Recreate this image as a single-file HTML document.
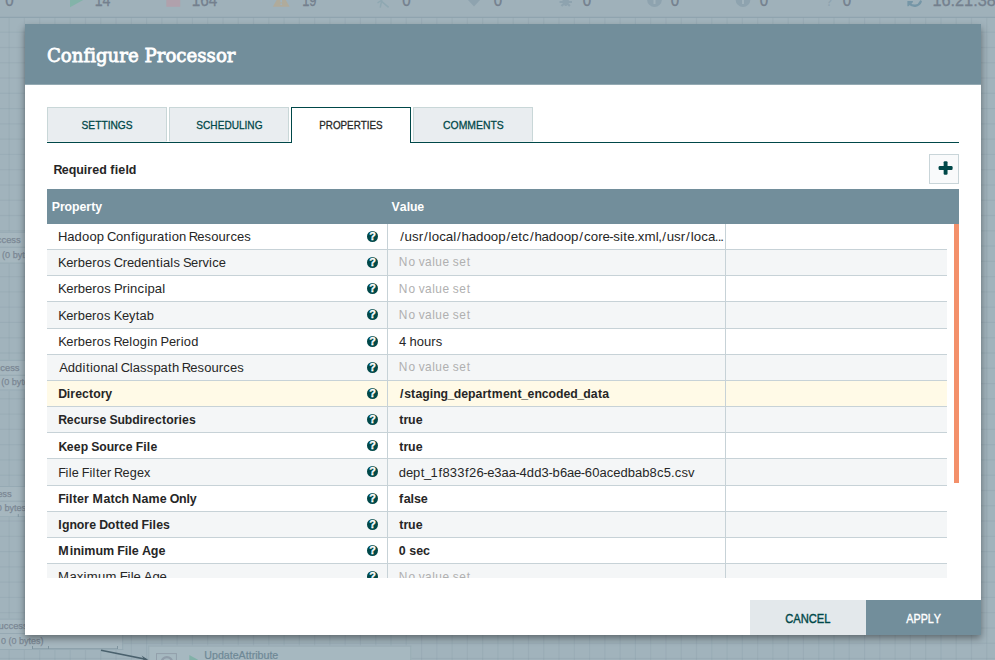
<!DOCTYPE html>
<html lang="en">
<head>
<meta charset="utf-8">
<title>Configure Processor</title>
<style>
*{box-sizing:border-box;margin:0;padding:0}
html,body{width:995px;height:660px;overflow:hidden}
body{position:relative;background:#a1b3bc;font-family:'Liberation Sans',Arial,sans-serif;color:#262626}
#canvas{position:absolute;left:0;top:0;width:995px;height:660px}
#shadow{position:absolute;left:25px;top:24px;width:956px;height:611px;box-shadow:0 3.5px 7.5px 0 rgba(0,0,0,.42)}
#geo{position:absolute;left:0;top:0}
#txt{position:absolute;left:0;top:0;font-family:'Liberation Sans',Arial,sans-serif;font-variant-ligatures:none;font-kerning:none}
#bgt{position:absolute;left:0;top:0;font-family:'Liberation Sans',Arial,sans-serif}
#grid{position:absolute;left:0;top:0;width:995px;height:578px;overflow:hidden}
.q{position:absolute;left:367px;width:11.2px;height:11.2px;border-radius:50%;background:#004849;color:#fff;font-size:10.8px;font-weight:bold;line-height:11.4px;text-align:center;display:block;-webkit-text-stroke:0.35px #fff}
</style>
</head>
<body>
<svg id="canvas" width="995" height="660" viewBox="0 0 995 660">
<rect x="8.55" y="17.8" width="1.1" height="650" fill="rgba(105,130,143,0.13)"/>
<rect x="23.83" y="17.8" width="1.1" height="650" fill="rgba(105,130,143,0.13)"/>
<rect x="39.10" y="17.8" width="1.1" height="650" fill="rgba(105,130,143,0.13)"/>
<rect x="54.38" y="17.8" width="1.1" height="650" fill="rgba(105,130,143,0.13)"/>
<rect x="69.65" y="17.8" width="1.1" height="650" fill="rgba(105,130,143,0.13)"/>
<rect x="84.93" y="17.8" width="1.1" height="650" fill="rgba(105,130,143,0.13)"/>
<rect x="100.21" y="17.8" width="1.1" height="650" fill="rgba(105,130,143,0.13)"/>
<rect x="115.48" y="17.8" width="1.1" height="650" fill="rgba(105,130,143,0.13)"/>
<rect x="130.76" y="17.8" width="1.1" height="650" fill="rgba(105,130,143,0.13)"/>
<rect x="146.03" y="17.8" width="1.1" height="650" fill="rgba(105,130,143,0.13)"/>
<rect x="161.31" y="17.8" width="1.1" height="650" fill="rgba(105,130,143,0.13)"/>
<rect x="176.59" y="17.8" width="1.1" height="650" fill="rgba(105,130,143,0.13)"/>
<rect x="191.86" y="17.8" width="1.1" height="650" fill="rgba(105,130,143,0.13)"/>
<rect x="207.14" y="17.8" width="1.1" height="650" fill="rgba(105,130,143,0.13)"/>
<rect x="222.41" y="17.8" width="1.1" height="650" fill="rgba(105,130,143,0.13)"/>
<rect x="237.69" y="17.8" width="1.1" height="650" fill="rgba(105,130,143,0.13)"/>
<rect x="252.97" y="17.8" width="1.1" height="650" fill="rgba(105,130,143,0.13)"/>
<rect x="268.24" y="17.8" width="1.1" height="650" fill="rgba(105,130,143,0.13)"/>
<rect x="283.52" y="17.8" width="1.1" height="650" fill="rgba(105,130,143,0.13)"/>
<rect x="298.79" y="17.8" width="1.1" height="650" fill="rgba(105,130,143,0.13)"/>
<rect x="314.07" y="17.8" width="1.1" height="650" fill="rgba(105,130,143,0.13)"/>
<rect x="329.35" y="17.8" width="1.1" height="650" fill="rgba(105,130,143,0.13)"/>
<rect x="344.62" y="17.8" width="1.1" height="650" fill="rgba(105,130,143,0.13)"/>
<rect x="359.90" y="17.8" width="1.1" height="650" fill="rgba(105,130,143,0.13)"/>
<rect x="375.17" y="17.8" width="1.1" height="650" fill="rgba(105,130,143,0.13)"/>
<rect x="390.45" y="17.8" width="1.1" height="650" fill="rgba(105,130,143,0.13)"/>
<rect x="405.73" y="17.8" width="1.1" height="650" fill="rgba(105,130,143,0.13)"/>
<rect x="421.00" y="17.8" width="1.1" height="650" fill="rgba(105,130,143,0.13)"/>
<rect x="436.28" y="17.8" width="1.1" height="650" fill="rgba(105,130,143,0.13)"/>
<rect x="451.55" y="17.8" width="1.1" height="650" fill="rgba(105,130,143,0.13)"/>
<rect x="466.83" y="17.8" width="1.1" height="650" fill="rgba(105,130,143,0.13)"/>
<rect x="482.11" y="17.8" width="1.1" height="650" fill="rgba(105,130,143,0.13)"/>
<rect x="497.38" y="17.8" width="1.1" height="650" fill="rgba(105,130,143,0.13)"/>
<rect x="512.66" y="17.8" width="1.1" height="650" fill="rgba(105,130,143,0.13)"/>
<rect x="527.93" y="17.8" width="1.1" height="650" fill="rgba(105,130,143,0.13)"/>
<rect x="543.21" y="17.8" width="1.1" height="650" fill="rgba(105,130,143,0.13)"/>
<rect x="558.49" y="17.8" width="1.1" height="650" fill="rgba(105,130,143,0.13)"/>
<rect x="573.76" y="17.8" width="1.1" height="650" fill="rgba(105,130,143,0.13)"/>
<rect x="589.04" y="17.8" width="1.1" height="650" fill="rgba(105,130,143,0.13)"/>
<rect x="604.31" y="17.8" width="1.1" height="650" fill="rgba(105,130,143,0.13)"/>
<rect x="619.59" y="17.8" width="1.1" height="650" fill="rgba(105,130,143,0.13)"/>
<rect x="634.87" y="17.8" width="1.1" height="650" fill="rgba(105,130,143,0.13)"/>
<rect x="650.14" y="17.8" width="1.1" height="650" fill="rgba(105,130,143,0.13)"/>
<rect x="665.42" y="17.8" width="1.1" height="650" fill="rgba(105,130,143,0.13)"/>
<rect x="680.69" y="17.8" width="1.1" height="650" fill="rgba(105,130,143,0.13)"/>
<rect x="695.97" y="17.8" width="1.1" height="650" fill="rgba(105,130,143,0.13)"/>
<rect x="711.25" y="17.8" width="1.1" height="650" fill="rgba(105,130,143,0.13)"/>
<rect x="726.52" y="17.8" width="1.1" height="650" fill="rgba(105,130,143,0.13)"/>
<rect x="741.80" y="17.8" width="1.1" height="650" fill="rgba(105,130,143,0.13)"/>
<rect x="757.07" y="17.8" width="1.1" height="650" fill="rgba(105,130,143,0.13)"/>
<rect x="772.35" y="17.8" width="1.1" height="650" fill="rgba(105,130,143,0.13)"/>
<rect x="787.63" y="17.8" width="1.1" height="650" fill="rgba(105,130,143,0.13)"/>
<rect x="802.90" y="17.8" width="1.1" height="650" fill="rgba(105,130,143,0.13)"/>
<rect x="818.18" y="17.8" width="1.1" height="650" fill="rgba(105,130,143,0.13)"/>
<rect x="833.45" y="17.8" width="1.1" height="650" fill="rgba(105,130,143,0.13)"/>
<rect x="848.73" y="17.8" width="1.1" height="650" fill="rgba(105,130,143,0.13)"/>
<rect x="864.01" y="17.8" width="1.1" height="650" fill="rgba(105,130,143,0.13)"/>
<rect x="879.28" y="17.8" width="1.1" height="650" fill="rgba(105,130,143,0.13)"/>
<rect x="894.56" y="17.8" width="1.1" height="650" fill="rgba(105,130,143,0.13)"/>
<rect x="909.83" y="17.8" width="1.1" height="650" fill="rgba(105,130,143,0.13)"/>
<rect x="925.11" y="17.8" width="1.1" height="650" fill="rgba(105,130,143,0.13)"/>
<rect x="940.39" y="17.8" width="1.1" height="650" fill="rgba(105,130,143,0.13)"/>
<rect x="955.66" y="17.8" width="1.1" height="650" fill="rgba(105,130,143,0.13)"/>
<rect x="970.94" y="17.8" width="1.1" height="650" fill="rgba(105,130,143,0.13)"/>
<rect x="986.21" y="17.8" width="1.1" height="650" fill="rgba(105,130,143,0.13)"/>
<rect x="0" y="31.65" width="995" height="1.1" fill="rgba(105,130,143,0.13)"/>
<rect x="0" y="46.93" width="995" height="1.1" fill="rgba(105,130,143,0.13)"/>
<rect x="0" y="62.20" width="995" height="1.1" fill="rgba(105,130,143,0.13)"/>
<rect x="0" y="77.48" width="995" height="1.1" fill="rgba(105,130,143,0.13)"/>
<rect x="0" y="92.75" width="995" height="1.1" fill="rgba(105,130,143,0.13)"/>
<rect x="0" y="108.03" width="995" height="1.1" fill="rgba(105,130,143,0.13)"/>
<rect x="0" y="123.31" width="995" height="1.1" fill="rgba(105,130,143,0.13)"/>
<rect x="0" y="138.58" width="995" height="1.1" fill="rgba(105,130,143,0.13)"/>
<rect x="0" y="153.86" width="995" height="1.1" fill="rgba(105,130,143,0.13)"/>
<rect x="0" y="169.13" width="995" height="1.1" fill="rgba(105,130,143,0.13)"/>
<rect x="0" y="184.41" width="995" height="1.1" fill="rgba(105,130,143,0.13)"/>
<rect x="0" y="199.69" width="995" height="1.1" fill="rgba(105,130,143,0.13)"/>
<rect x="0" y="214.96" width="995" height="1.1" fill="rgba(105,130,143,0.13)"/>
<rect x="0" y="230.24" width="995" height="1.1" fill="rgba(105,130,143,0.13)"/>
<rect x="0" y="245.51" width="995" height="1.1" fill="rgba(105,130,143,0.13)"/>
<rect x="0" y="260.79" width="995" height="1.1" fill="rgba(105,130,143,0.13)"/>
<rect x="0" y="276.07" width="995" height="1.1" fill="rgba(105,130,143,0.13)"/>
<rect x="0" y="291.34" width="995" height="1.1" fill="rgba(105,130,143,0.13)"/>
<rect x="0" y="306.62" width="995" height="1.1" fill="rgba(105,130,143,0.13)"/>
<rect x="0" y="321.89" width="995" height="1.1" fill="rgba(105,130,143,0.13)"/>
<rect x="0" y="337.17" width="995" height="1.1" fill="rgba(105,130,143,0.13)"/>
<rect x="0" y="352.45" width="995" height="1.1" fill="rgba(105,130,143,0.13)"/>
<rect x="0" y="367.72" width="995" height="1.1" fill="rgba(105,130,143,0.13)"/>
<rect x="0" y="383.00" width="995" height="1.1" fill="rgba(105,130,143,0.13)"/>
<rect x="0" y="398.27" width="995" height="1.1" fill="rgba(105,130,143,0.13)"/>
<rect x="0" y="413.55" width="995" height="1.1" fill="rgba(105,130,143,0.13)"/>
<rect x="0" y="428.83" width="995" height="1.1" fill="rgba(105,130,143,0.13)"/>
<rect x="0" y="444.10" width="995" height="1.1" fill="rgba(105,130,143,0.13)"/>
<rect x="0" y="459.38" width="995" height="1.1" fill="rgba(105,130,143,0.13)"/>
<rect x="0" y="474.65" width="995" height="1.1" fill="rgba(105,130,143,0.13)"/>
<rect x="0" y="489.93" width="995" height="1.1" fill="rgba(105,130,143,0.13)"/>
<rect x="0" y="505.21" width="995" height="1.1" fill="rgba(105,130,143,0.13)"/>
<rect x="0" y="520.48" width="995" height="1.1" fill="rgba(105,130,143,0.13)"/>
<rect x="0" y="535.76" width="995" height="1.1" fill="rgba(105,130,143,0.13)"/>
<rect x="0" y="551.03" width="995" height="1.1" fill="rgba(105,130,143,0.13)"/>
<rect x="0" y="566.31" width="995" height="1.1" fill="rgba(105,130,143,0.13)"/>
<rect x="0" y="581.59" width="995" height="1.1" fill="rgba(105,130,143,0.13)"/>
<rect x="0" y="596.86" width="995" height="1.1" fill="rgba(105,130,143,0.13)"/>
<rect x="0" y="612.14" width="995" height="1.1" fill="rgba(105,130,143,0.13)"/>
<rect x="0" y="627.41" width="995" height="1.1" fill="rgba(105,130,143,0.13)"/>
<rect x="0" y="642.69" width="995" height="1.1" fill="rgba(105,130,143,0.13)"/>
<rect x="0" y="657.97" width="995" height="1.1" fill="rgba(105,130,143,0.13)"/>
<rect x="0" y="0" width="995" height="16.8" fill="#9fb1ba"/><rect x="0" y="16.8" width="995" height="1.1" fill="#8da2ad"/>
<rect x="-5.00" y="231.80" width="63.00" height="31.80" fill="#a6b7bf"/>
<rect x="-5.00" y="231.80" width="63.00" height="1.00" fill="#96aab4"/>
<rect x="-5.00" y="262.60" width="63.00" height="1.00" fill="#96aab4"/>
<rect x="-5.00" y="246.70" width="63.00" height="1.00" fill="rgba(140,160,172,.6)"/>
<rect x="57.00" y="231.80" width="1.00" height="31.80" fill="#96aab4"/>
<rect x="-5.00" y="359.80" width="63.00" height="30.70" fill="#a6b7bf"/>
<rect x="-5.00" y="359.80" width="63.00" height="1.00" fill="#96aab4"/>
<rect x="-5.00" y="389.50" width="63.00" height="1.00" fill="#96aab4"/>
<rect x="-5.00" y="374.80" width="63.00" height="1.00" fill="rgba(140,160,172,.6)"/>
<rect x="57.00" y="359.80" width="1.00" height="30.70" fill="#96aab4"/>
<rect x="-5.00" y="486.00" width="63.00" height="31.00" fill="#a6b7bf"/>
<rect x="-5.00" y="486.00" width="63.00" height="1.00" fill="#96aab4"/>
<rect x="-5.00" y="516.00" width="63.00" height="1.00" fill="#96aab4"/>
<rect x="-5.00" y="500.70" width="63.00" height="1.00" fill="rgba(140,160,172,.6)"/>
<rect x="57.00" y="486.00" width="1.00" height="31.00" fill="#96aab4"/>
<rect x="-5.00" y="618.60" width="128.20" height="31.40" fill="#a6b7bf"/>
<rect x="-5.00" y="618.60" width="128.20" height="1.00" fill="#96aab4"/>
<rect x="-5.00" y="649.00" width="128.20" height="1.00" fill="#96aab4"/>
<rect x="-5.00" y="633.00" width="128.20" height="1.00" fill="rgba(140,160,172,.6)"/>
<rect x="122.20" y="618.60" width="1.00" height="31.40" fill="#96aab4"/>
<rect x="32.40" y="648.00" width="85.40" height="1.00" fill="#8ea2ac"/>
<rect x="32.00" y="646.00" width="1.00" height="3.00" fill="#7f949f"/>
<rect x="48.00" y="646.00" width="1.00" height="3.00" fill="#7f949f"/>
<rect x="117.00" y="646.00" width="1.00" height="3.00" fill="#7f949f"/>
<rect x="-5.00" y="516.00" width="23.60" height="1.00" fill="#9aaeb7"/>
<rect x="17.80" y="514.00" width="1.00" height="3.00" fill="#8398a3"/>
<rect x="148.30" y="645.60" width="263.00" height="24.40" fill="#a6b8c0"/>
<rect x="148.30" y="645.60" width="263.00" height="1.00" fill="#98abb4"/>
<rect x="148.30" y="645.60" width="1.00" height="24.40" fill="#98abb4"/>
<rect x="410.30" y="645.60" width="1.00" height="24.40" fill="#98abb4"/>
<rect x="156.5" y="653.6" width="19.9" height="20" fill="none" stroke="#929fab" stroke-width="1"/>
<circle cx="166.9" cy="662.2" r="5.1" fill="none" stroke="#909dA9" stroke-width="2.4"/>
<polygon points="189.3,654.9 198.0,659.8 189.3,664.7" fill="#82b1a8"/>
<line x1="101" y1="650.3" x2="146" y2="659.3" stroke="#4a616d" stroke-width="1.6"/>
<polygon points="148.3,660.0 141.6,655.4 143.8,659.0 140.5,663.0" fill="#4a616d"/>
<polygon points="70,-8 84,-0.4 70,7.2" fill="#83b3a9"/>
<rect x="166.30" y="-7.00" width="13.90" height="13.80" fill="#b0a1ac"/>
<polygon points="281.2,-8 289.6,6.8 272.8,6.8" fill="#b0ab9b"/>
<circle cx="281.2" cy="4.3" r="1.0" fill="#a1b3bc"/><rect x="280.3" y="-4" width="1.8" height="6.4" fill="#a1b3bc"/>
<path d="M382.2 -2 L380.2 7.6 M381.6 1.4 L388.6 7.4 M382 0 L377.5 3" stroke="#8fa8b2" stroke-width="1.5" fill="none"/>
<polygon points="468,0 474,6.5 480,0" fill="#8ea3af"/>
<path d="M559.5 2 h12.5 M565.7 -3 v9 M561.5 -2 l8.4 8 M569.9 -2 l-8.4 8" stroke="#8ea3af" stroke-width="2.2" fill="none"/>
<circle cx="654.5" cy="-0.5" r="7.4" fill="#8ea3af"/><rect x="653.5" y="-2" width="2" height="6" fill="#a1b3bc"/>
<circle cx="743" cy="-0.5" r="7.4" fill="#8ea3af"/><rect x="742" y="-2" width="2" height="6" fill="#a1b3bc"/>
<path d="M909.6 3.4 C 912.5 6.9, 918.6 6.6, 920.7 1.6" stroke="#7596a7" stroke-width="2.4" fill="none" stroke-linecap="round"/><polygon points="907.4,1 912.9,1 912.9,2.2 908.4,6.2 907.4,6.2" fill="#7596a7"/>

</svg>
<svg id="bgt" width="995" height="660" viewBox="0 0 995 660">
<text x="5.25" y="6" font-size="16.2" fill="#74808e" textLength="8.40" lengthAdjust="spacingAndGlyphs" stroke="#74808e" stroke-width="0.3">0</text>
<text x="94.65" y="6" font-size="16.2" fill="#74808e" textLength="15.73" lengthAdjust="spacingAndGlyphs" stroke="#74808e" stroke-width="0.3">14</text>
<text x="191.78" y="6" font-size="16.2" fill="#74808e" textLength="25.43" lengthAdjust="spacingAndGlyphs" stroke="#74808e" stroke-width="0.3">164</text>
<text x="302.14" y="6" font-size="16.2" fill="#74808e" textLength="14.36" lengthAdjust="spacingAndGlyphs" stroke="#74808e" stroke-width="0.3">19</text>
<text x="402.15" y="6" font-size="16.2" fill="#74808e" textLength="8.40" lengthAdjust="spacingAndGlyphs" stroke="#74808e" stroke-width="0.3">0</text>
<text x="493.65" y="6" font-size="16.2" fill="#74808e" textLength="8.40" lengthAdjust="spacingAndGlyphs" stroke="#74808e" stroke-width="0.3">0</text>
<text x="582.85" y="6" font-size="16.2" fill="#74808e" textLength="8.40" lengthAdjust="spacingAndGlyphs" stroke="#74808e" stroke-width="0.3">0</text>
<text x="670.85" y="6" font-size="16.2" fill="#74808e" textLength="8.40" lengthAdjust="spacingAndGlyphs" stroke="#74808e" stroke-width="0.3">0</text>
<text x="759.85" y="6" font-size="16.2" fill="#74808e" textLength="8.40" lengthAdjust="spacingAndGlyphs" stroke="#74808e" stroke-width="0.3">0</text>
<text x="842.85" y="6" font-size="16.2" fill="#74808e" textLength="8.40" lengthAdjust="spacingAndGlyphs" stroke="#74808e" stroke-width="0.3">0</text>
<text x="932.41" y="6" font-size="16.2" fill="#74808e" textLength="63.35" lengthAdjust="spacingAndGlyphs" stroke="#74808e" stroke-width="0.3">16:21:38</text>
<text x="826.17" y="6" font-size="13.5" fill="#8ea3af" textLength="5.78" lengthAdjust="spacingAndGlyphs" font-weight="bold">?</text>
<text x="-13.14" y="243" font-size="9.9" fill="#7b8794" textLength="33.86" lengthAdjust="spacingAndGlyphs" stroke="#7b8794" stroke-width="0.25">success</text>
<text x="-5.54" y="258" font-size="9.9" fill="#7b8794" textLength="42.99" lengthAdjust="spacingAndGlyphs" stroke="#7b8794" stroke-width="0.25">0 (0 bytes)</text>
<text x="-14.34" y="371" font-size="9.9" fill="#7b8794" textLength="33.86" lengthAdjust="spacingAndGlyphs" stroke="#7b8794" stroke-width="0.25">success</text>
<text x="-6.44" y="385" font-size="9.9" fill="#7b8794" textLength="42.99" lengthAdjust="spacingAndGlyphs" stroke="#7b8794" stroke-width="0.25">0 (0 bytes)</text>
<text x="-22.14" y="497" font-size="9.9" fill="#7b8794" textLength="33.86" lengthAdjust="spacingAndGlyphs" stroke="#7b8794" stroke-width="0.25">success</text>
<text x="-13.84" y="511" font-size="9.9" fill="#7b8794" textLength="42.99" lengthAdjust="spacingAndGlyphs" stroke="#7b8794" stroke-width="0.25">0 (0 bytes)</text>
<text x="-6.14" y="629" font-size="9.9" fill="#7b8794" textLength="33.86" lengthAdjust="spacingAndGlyphs" stroke="#7b8794" stroke-width="0.25">success</text>
<text x="0.96" y="644" font-size="9.9" fill="#7b8794" textLength="42.48" lengthAdjust="spacingAndGlyphs" stroke="#7b8794" stroke-width="0.25">0 (0 bytes)</text>
<text x="204.27" y="659" font-size="11.4" fill="#6e8896" textLength="74.01" lengthAdjust="spacingAndGlyphs" stroke="#6e8896" stroke-width="0.2">UpdateAttribute</text>
</svg>
<div id="shadow"></div>
<svg id="geo" width="995" height="660" viewBox="0 0 995 660">
<rect x="25" y="24" width="956" height="611" fill="#ffffff"/>
<rect x="25" y="24" width="956" height="60.75" fill="#728e9b"/>
<rect x="47" y="107" width="120" height="34.3" fill="#c9d7d8"/>
<rect x="48" y="108" width="118" height="33.3" fill="#e9edf0"/>
<rect x="169" y="107" width="120" height="34.3" fill="#c9d7d8"/>
<rect x="170" y="108" width="118" height="33.3" fill="#e9edf0"/>
<rect x="291" y="107" width="120" height="36" fill="#004849"/>
<rect x="292" y="108" width="118" height="35" fill="#ffffff"/>
<rect x="413" y="107" width="120" height="34.3" fill="#c9d7d8"/>
<rect x="414" y="108" width="118" height="33.3" fill="#e9edf0"/>
<rect x="47" y="142" width="244" height="1" fill="#004849"/>
<rect x="411" y="142" width="548" height="1" fill="#004849"/>
<rect x="929" y="154" width="30" height="30" fill="#c9d5d9"/>
<rect x="930" y="155" width="28" height="28" fill="#f9fafb"/>
<rect x="938.60" y="166.00" width="14.0" height="3.9" rx="1.2" fill="#004849"/>
<rect x="943.65" y="161.15" width="3.9" height="13.6" rx="1.2" fill="#004849"/>
<rect x="47" y="189" width="912" height="35" fill="#728e9b"/>
<rect x="47" y="224" width="900" height="26" fill="#ffffff"/>
<rect x="47" y="249" width="900" height="1" fill="#c7d2d7"/>
<rect x="387" y="224" width="1" height="26" fill="#c7d2d7"/>
<rect x="725" y="224" width="1" height="26" fill="#c7d2d7"/>
<rect x="47" y="250" width="900" height="26" fill="#f4f6f7"/>
<rect x="47" y="275" width="900" height="1" fill="#c7d2d7"/>
<rect x="387" y="250" width="1" height="26" fill="#c7d2d7"/>
<rect x="725" y="250" width="1" height="26" fill="#c7d2d7"/>
<rect x="47" y="276" width="900" height="26" fill="#ffffff"/>
<rect x="47" y="301" width="900" height="1" fill="#c7d2d7"/>
<rect x="387" y="276" width="1" height="26" fill="#c7d2d7"/>
<rect x="725" y="276" width="1" height="26" fill="#c7d2d7"/>
<rect x="47" y="302" width="900" height="27" fill="#f4f6f7"/>
<rect x="47" y="328" width="900" height="1" fill="#c7d2d7"/>
<rect x="387" y="302" width="1" height="27" fill="#c7d2d7"/>
<rect x="725" y="302" width="1" height="27" fill="#c7d2d7"/>
<rect x="47" y="329" width="900" height="26" fill="#ffffff"/>
<rect x="47" y="354" width="900" height="1" fill="#c7d2d7"/>
<rect x="387" y="329" width="1" height="26" fill="#c7d2d7"/>
<rect x="725" y="329" width="1" height="26" fill="#c7d2d7"/>
<rect x="47" y="355" width="900" height="26" fill="#f4f6f7"/>
<rect x="47" y="380" width="900" height="1" fill="#c7d2d7"/>
<rect x="387" y="355" width="1" height="26" fill="#c7d2d7"/>
<rect x="725" y="355" width="1" height="26" fill="#c7d2d7"/>
<rect x="47" y="381" width="900" height="26" fill="#fffae7"/>
<rect x="47" y="406" width="900" height="1" fill="#c7d2d7"/>
<rect x="387" y="381" width="1" height="26" fill="#c7d2d7"/>
<rect x="725" y="381" width="1" height="26" fill="#c7d2d7"/>
<rect x="47" y="407" width="900" height="26" fill="#f4f6f7"/>
<rect x="47" y="432" width="900" height="1" fill="#c7d2d7"/>
<rect x="387" y="407" width="1" height="26" fill="#c7d2d7"/>
<rect x="725" y="407" width="1" height="26" fill="#c7d2d7"/>
<rect x="47" y="433" width="900" height="26" fill="#ffffff"/>
<rect x="47" y="458" width="900" height="1" fill="#c7d2d7"/>
<rect x="387" y="433" width="1" height="26" fill="#c7d2d7"/>
<rect x="725" y="433" width="1" height="26" fill="#c7d2d7"/>
<rect x="47" y="459" width="900" height="27" fill="#f4f6f7"/>
<rect x="47" y="485" width="900" height="1" fill="#c7d2d7"/>
<rect x="387" y="459" width="1" height="27" fill="#c7d2d7"/>
<rect x="725" y="459" width="1" height="27" fill="#c7d2d7"/>
<rect x="47" y="486" width="900" height="26" fill="#ffffff"/>
<rect x="47" y="511" width="900" height="1" fill="#c7d2d7"/>
<rect x="387" y="486" width="1" height="26" fill="#c7d2d7"/>
<rect x="725" y="486" width="1" height="26" fill="#c7d2d7"/>
<rect x="47" y="512" width="900" height="26" fill="#f4f6f7"/>
<rect x="47" y="537" width="900" height="1" fill="#c7d2d7"/>
<rect x="387" y="512" width="1" height="26" fill="#c7d2d7"/>
<rect x="725" y="512" width="1" height="26" fill="#c7d2d7"/>
<rect x="47" y="538" width="900" height="26" fill="#ffffff"/>
<rect x="47" y="563" width="900" height="1" fill="#c7d2d7"/>
<rect x="387" y="538" width="1" height="26" fill="#c7d2d7"/>
<rect x="725" y="538" width="1" height="26" fill="#c7d2d7"/>
<rect x="47" y="564" width="900" height="14" fill="#f4f6f7"/>
<rect x="387" y="564" width="1" height="14" fill="#c7d2d7"/>
<rect x="725" y="564" width="1" height="14" fill="#c7d2d7"/>
<rect x="954" y="224" width="5" height="259" fill="#f3906a"/>
<rect x="750" y="600" width="116" height="35" fill="#e3e8eb"/>
<rect x="866" y="600" width="115" height="35" fill="#728e9b"/>
</svg>
<div id="grid">
<span class="q" style="top:230.90px">?</span>
<span class="q" style="top:256.90px">?</span>
<span class="q" style="top:282.90px">?</span>
<span class="q" style="top:308.90px">?</span>
<span class="q" style="top:335.90px">?</span>
<span class="q" style="top:361.90px">?</span>
<span class="q" style="top:387.90px">?</span>
<span class="q" style="top:413.90px">?</span>
<span class="q" style="top:439.90px">?</span>
<span class="q" style="top:465.90px">?</span>
<span class="q" style="top:492.90px">?</span>
<span class="q" style="top:518.90px">?</span>
<span class="q" style="top:544.90px">?</span>
<span class="q" style="top:570.90px">?</span>
</div>
<svg id="txt" width="995" height="660" viewBox="0 0 995 660">
<clipPath id="gc"><rect x="47" y="224" width="900" height="354"/></clipPath>
<g clip-path="url(#gc)">
<text transform="scale(0.9793,1)" x="59.36 68.78 76.17 83.73 91.33 98.87 106.10 109.14 118.38 125.86 133.70 138.00 141.13 148.54 155.96 160.35 168.00 172.17 175.36 182.84 190.02 192.82 201.55 208.89 215.76 223.23 230.64 235.27 241.92 249.37" y="241" font-size="13.3" fill="#262626">Hadoop Configuration Resources</text>
<text transform="scale(1.0000,1)" x="400.15 404.60 411.96 418.66 423.94 428.59 431.69 439.22 445.83 453.20 457.12 461.57 468.73 475.98 483.41 490.87 498.27 506.49 510.81 518.26 522.35 529.95 534.40 541.56 548.81 556.24 563.70 571.10 579.32 583.97 590.75 598.18 602.38 609.14 613.21 620.02 623.37 627.13 634.17 637.66 644.42 655.81 658.31 662.29 666.74 674.10 680.80 686.08 690.73 693.83 701.36 707.98 714.85 717.77 720.32" y="241" font-size="13.3" fill="#262626">/usr/local/hadoop/etc/hadoop/core-site.xml,/usr/loca...</text>
<text transform="scale(0.9704,1)" x="59.91 68.26 75.62 80.22 87.60 94.96 99.63 107.35 113.99 117.11 126.39 130.78 138.18 145.58 152.90 160.69 164.92 168.02 175.56 178.84 185.48 188.59 196.92 204.28 208.73 215.50 218.84 225.47" y="267" font-size="13.3" fill="#262626">Kerberos Credentials Service</text>
<text transform="scale(1.0000,1)" x="398.82 408.38 415.34 418.77 425.11 432.20 435.36 442.38 449.08 452.71 459.16 466.83" y="266" font-size="11.9" fill="#b0b0b0">No value set</text>
<text transform="scale(0.9852,1)" x="59.00 67.21 74.49 79.01 86.30 93.58 98.16 105.79 112.37 115.64 124.34 128.96 132.04 139.60 146.56 149.71 157.09 164.70" y="293" font-size="13.3" fill="#262626">Kerberos Principal</text>
<text transform="scale(1.0000,1)" x="398.82 408.38 415.34 418.77 425.11 432.20 435.36 442.38 449.08 452.71 459.16 466.83" y="293" font-size="11.9" fill="#b0b0b0">No value set</text>
<text transform="scale(0.9683,1)" x="60.05 68.40 75.76 80.36 87.75 95.11 99.77 107.49 114.14 117.47 126.03 133.19 140.08 144.12 151.69" y="320" font-size="13.3" fill="#262626">Kerberos Keytab</text>
<text transform="scale(1.0000,1)" x="398.82 408.38 415.34 418.77 425.11 432.20 435.36 442.38 449.08 452.71 459.16 466.83" y="319" font-size="11.9" fill="#b0b0b0">No value set</text>
<text transform="scale(0.9691,1)" x="60.00 68.36 75.73 80.34 87.73 95.09 99.76 107.49 114.14 117.03 125.90 133.35 136.64 144.30 151.97 155.13 162.39 165.75 174.35 181.72 186.39 189.68 197.47" y="346" font-size="13.3" fill="#262626">Kerberos Relogin Period</text>
<text transform="scale(0.9776,1)" x="408.14 415.41 418.87 426.32 433.78 441.18 445.85" y="346" font-size="13.3" fill="#262626">4 hours</text>
<text transform="scale(0.9787,1)" x="60.46 69.23 76.75 84.34 87.77 91.94 95.14 102.62 109.92 117.39 120.29 123.32 132.61 135.63 143.07 149.94 156.75 164.12 171.77 175.77 182.94 185.75 194.49 201.83 208.70 216.18 223.59 228.23 234.88 242.33" y="372" font-size="13.3" fill="#262626">Additional Classpath Resources</text>
<text transform="scale(1.0000,1)" x="398.82 408.38 415.34 418.77 425.11 432.20 435.36 442.38 449.08 452.71 459.16 466.83" y="371" font-size="11.9" fill="#b0b0b0">No value set</text>
<text transform="scale(0.9221,1)" x="63.31 72.46 76.22 81.53 89.05 96.62 101.18 109.25 114.25" y="398" font-size="13.3" fill="#262626" font-weight="bold">Directory</text>
<text transform="scale(0.9223,1)" x="433.69 438.21 445.72 450.40 457.85 466.01 469.67 477.66 485.18 491.89 500.05 507.49 515.59 523.07 528.42 533.23 545.40 552.83 561.02 565.05 571.99 579.42 587.44 594.78 602.77 610.93 618.37 625.81 632.52 640.63 648.28 653.04" y="398" font-size="13.3" fill="#262626" font-weight="bold">/staging_department_encoded_data</text>
<text transform="scale(0.9203,1)" x="63.44 72.52 80.07 87.38 95.42 100.55 108.05 115.51 119.05 127.74 135.68 143.64 151.75 155.53 160.86 168.41 175.99 180.58 188.68 193.93 197.85 205.25" y="424" font-size="13.3" fill="#262626" font-weight="bold">Recurse Subdirectories</text>
<text transform="scale(0.9314,1)" x="428.54 433.20 438.16 446.24" y="424" font-size="13.3" fill="#262626" font-weight="bold">true</text>
<text transform="scale(0.9167,1)" x="63.69 72.80 80.52 88.00 95.99 99.54 108.32 116.35 124.41 129.62 137.20 144.69 148.15 156.19 160.05 164.11" y="451" font-size="13.3" fill="#262626" font-weight="bold">Keep Source File</text>
<text transform="scale(0.9314,1)" x="428.54 433.20 438.16 446.24" y="451" font-size="13.3" fill="#262626" font-weight="bold">true</text>
<text transform="scale(0.9530,1)" x="61.03 68.80 72.14 75.24 82.45 85.75 93.81 97.15 100.71 104.75 112.22 116.62 119.61 128.61 136.12 143.64 151.16" y="477" font-size="13.3" fill="#262626">File Filter Regex</text>
<text transform="scale(0.9777,1)" x="407.86 415.24 422.54 430.33 433.68 440.45 448.38 452.61 460.12 467.63 475.56 479.79 487.30 494.38 498.29 505.59 512.98 520.26 527.23 531.34 538.87 546.41 553.94 561.03 565.14 572.65 580.04 587.22 594.10 598.21 605.73 613.12 620.63 627.30 634.62 642.14 649.53 656.92 664.43 672.06 678.95 686.31 690.10 697.05 703.65" y="477" font-size="13.3" fill="#262626">dept_1f833f26-e3aa-4dd3-b6ae-60acedbab8c5.csv</text>
<text transform="scale(0.9353,1)" x="62.41 70.05 73.83 77.71 82.37 89.81 94.85 99.00 110.67 118.24 122.75 129.93 137.79 141.52 151.30 158.85 170.89 178.26 181.48 191.30 199.31 202.77" y="503" font-size="13.3" fill="#262626" font-weight="bold">Filter Match Name Only</text>
<text transform="scale(0.9455,1)" x="422.07 426.91 434.25 437.76 444.97" y="503" font-size="13.3" fill="#262626" font-weight="bold">false</text>
<text transform="scale(0.9258,1)" x="63.05 67.07 75.05 83.01 91.07 96.37 103.80 107.17 116.48 124.72 129.49 134.21 141.63 149.56 152.97 160.96 164.78 168.66 176.01" y="529" font-size="13.3" fill="#262626" font-weight="bold">Ignore Dotted Files</text>
<text transform="scale(0.9314,1)" x="428.54 433.20 438.16 446.24" y="529" font-size="13.3" fill="#262626" font-weight="bold">true</text>
<text transform="scale(0.9423,1)" x="61.94 74.09 77.66 85.65 89.48 101.24 109.30 121.12 124.46 132.37 136.13 139.93 147.29 150.74 160.12 168.27" y="555" font-size="13.3" fill="#262626" font-weight="bold">Minimum File Age</text>
<text transform="scale(0.9373,1)" x="425.46 433.25 436.69 444.02 451.31" y="555" font-size="13.3" fill="#262626" font-weight="bold">0 sec</text>
<text transform="scale(0.9877,1)" x="58.85 70.40 77.70 84.47 87.86 99.21 106.88 118.06 121.18 129.06 132.29 135.22 142.25 145.65 154.47 161.57" y="581" font-size="13.3" fill="#262626">Maximum File Age</text>
<text transform="scale(1.0000,1)" x="398.82 408.38 415.34 418.77 425.11 432.20 435.36 442.38 449.08 452.71 459.16 466.83" y="581" font-size="11.9" fill="#b0b0b0">No value set</text>
</g>
<text x="46.95" y="62" font-size="19.4" fill="#ffffff" textLength="188.57" lengthAdjust="spacingAndGlyphs" font-family="'DejaVu Serif','Liberation Serif',serif" stroke="#ffffff" stroke-width="0.8">Configure Processor</text>
<text x="81.57" y="129" font-size="11.6" fill="#004849" textLength="51.07" lengthAdjust="spacingAndGlyphs" stroke="#004849" stroke-width="0.3">SETTINGS</text>
<text x="196.37" y="129" font-size="11.6" fill="#004849" textLength="66.15" lengthAdjust="spacingAndGlyphs" stroke="#004849" stroke-width="0.3">SCHEDULING</text>
<text x="319.22" y="129" font-size="11.6" fill="#262626" textLength="63.40" lengthAdjust="spacingAndGlyphs" stroke="#262626" stroke-width="0.3">PROPERTIES</text>
<text x="443.11" y="129" font-size="11.6" fill="#004849" textLength="60.64" lengthAdjust="spacingAndGlyphs" stroke="#004849" stroke-width="0.3">COMMENTS</text>
<text transform="scale(0.9358,1)" x="57.10 66.11 73.54 81.45 89.51 93.26 98.55 105.96 113.89 117.80 122.60 126.48 134.06 137.55" y="174" font-size="13.3" fill="#262626" font-weight="bold">Required field</text>
<text transform="scale(0.9241,1)" x="55.92 64.84 69.93 77.86 85.98 93.47 98.79 103.16" y="211" font-size="13.3" fill="#ffffff" font-weight="bold">Property</text>
<text transform="scale(0.9251,1)" x="423.11 432.20 439.62 443.15 451.17" y="211" font-size="13.3" fill="#ffffff" font-weight="bold">Value</text>
<text x="785.20" y="623" font-size="13" fill="#004849" textLength="45.29" lengthAdjust="spacingAndGlyphs" stroke="#004849" stroke-width="0.4">CANCEL</text>
<text x="906.34" y="623" font-size="13" fill="#ffffff" textLength="34.63" lengthAdjust="spacingAndGlyphs" stroke="#ffffff" stroke-width="0.4">APPLY</text>
</svg>
</body>
</html>
